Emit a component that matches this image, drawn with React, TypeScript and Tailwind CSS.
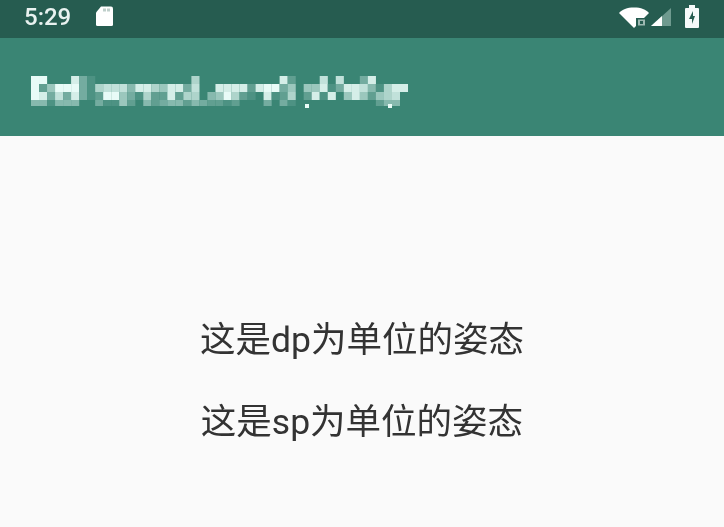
// brightness 0-9 per cell of the blurred mosaic that covers the title
const mosaicRows = [
  '99000831000000000000600000000008200070700380000',
  '92599931677748865883700888828993505581388741688',
  '98373831299531622826604596210812602818058525670',
  '44144400311520423442432212000303100000000002440',
]
const rowTops = [76, 84, 92, 100]
const rowHeights = [8, 8, 8, 6]

const cellFill = (level: number) => {
  const t = level / 9
  const mix = (a: number, b: number) => Math.round(a + (b - a) * t)
  return `rgb(${mix(58, 232)},${mix(133, 251)},${mix(116, 247)})`
}

function StatusBar() {
  return (
    <div className="flex h-[38px] items-center bg-[#265c50] pb-[5px] pl-6 pr-[25px]">
      <span className="font-['Roboto',sans-serif] text-[24px] font-medium leading-none text-[#e9f2f0] blur-[0.4px]">5:29</span>
      <svg className="ml-[24px] h-[23px] w-[19px] blur-[0.4px]" viewBox="0 0 19 22">
        <path d="M6 1h10a2 2 0 0 1 2 2v16a1.500 1.500 0 0 1-1.500 1.500H2.500A1.500 1.500 0 0 1 1 19V7z" fill="#fff" />
        <path d="M8 3h3v3H8zM12 3h3v3h-3z" fill="#bfcfcb" />
      </svg>
      <div className="ml-auto flex items-center blur-[0.4px]">
        <svg className="h-[22px] w-[31px]" viewBox="0 0 31 22">
          <path d="M0 7C3 3.500 8 1.500 15 1.500S27 3.500 30 7L15 22z" fill="#fff" />
          <path d="M17 12h13v10H17z" fill="#265c50" />
          <path d="M19 13.500h7v6h-7z" fill="#9db8b1" />
          <path d="M21 15h3v3h-3z" fill="#265c50" />
        </svg>
        <svg className="h-[22px] w-[23px]" viewBox="0 0 23 22">
          <path d="M1 20L21 2v18z" fill="#6f9a8f" />
          <path d="M1 20L12 10v10z" fill="#fff" />
        </svg>
        <svg className="ml-[12px] h-[24px] w-[14px]" viewBox="0 0 14 24">
          <path d="M4 0h6v3h3a1 1 0 0 1 1 1v18a1 1 0 0 1-1 1H1a1 1 0 0 1-1-1V4a1 1 0 0 1 1-1h3z" fill="#f6fafa" />
          <path d="M8 6L4 14h3v5l3-8H8z" fill="#265c50" />
        </svg>
      </div>
    </div>
  )
}

function AppBar() {
  return (
    <div className="h-[98px] bg-[#3a8574]">
      <svg className="block h-full w-[430px] blur-[0.7px]" viewBox="0 38 430 98">
        {mosaicRows.map((row, r) =>
          row.split('').map((level, c) =>
            level === '0' ? null : (
              <rect
                key={`${r}-${c}`}
                x={31 + c * 8.02}
                y={rowTops[r]}
                width={8.1}
                height={rowHeights[r]}
                fill={cellFill(Number(level))}
              />
            ),
          ),
        )}
        <rect x={305} y={104} width={4} height={4} fill="#e8fbf7" />
        <rect x={388} y={104} width={4} height={4} fill="#e8fbf7" />
      </svg>
    </div>
  )
}

export default function App() {
  return (
    <div className="flex h-[527px] w-[724px] flex-col overflow-hidden bg-[#fafafa]">
      <StatusBar />
      <AppBar />
      <div className="flex flex-col items-center pt-[183px] font-['Roboto','Noto_Sans_CJK_SC',sans-serif] text-[35.5px] leading-[42px] text-[#333333] blur-[0.5px]">
        <p>这是dp为单位的姿态</p>
        <p className="mt-[40px]">这是sp为单位的姿态</p>
      </div>
    </div>
  )
}
